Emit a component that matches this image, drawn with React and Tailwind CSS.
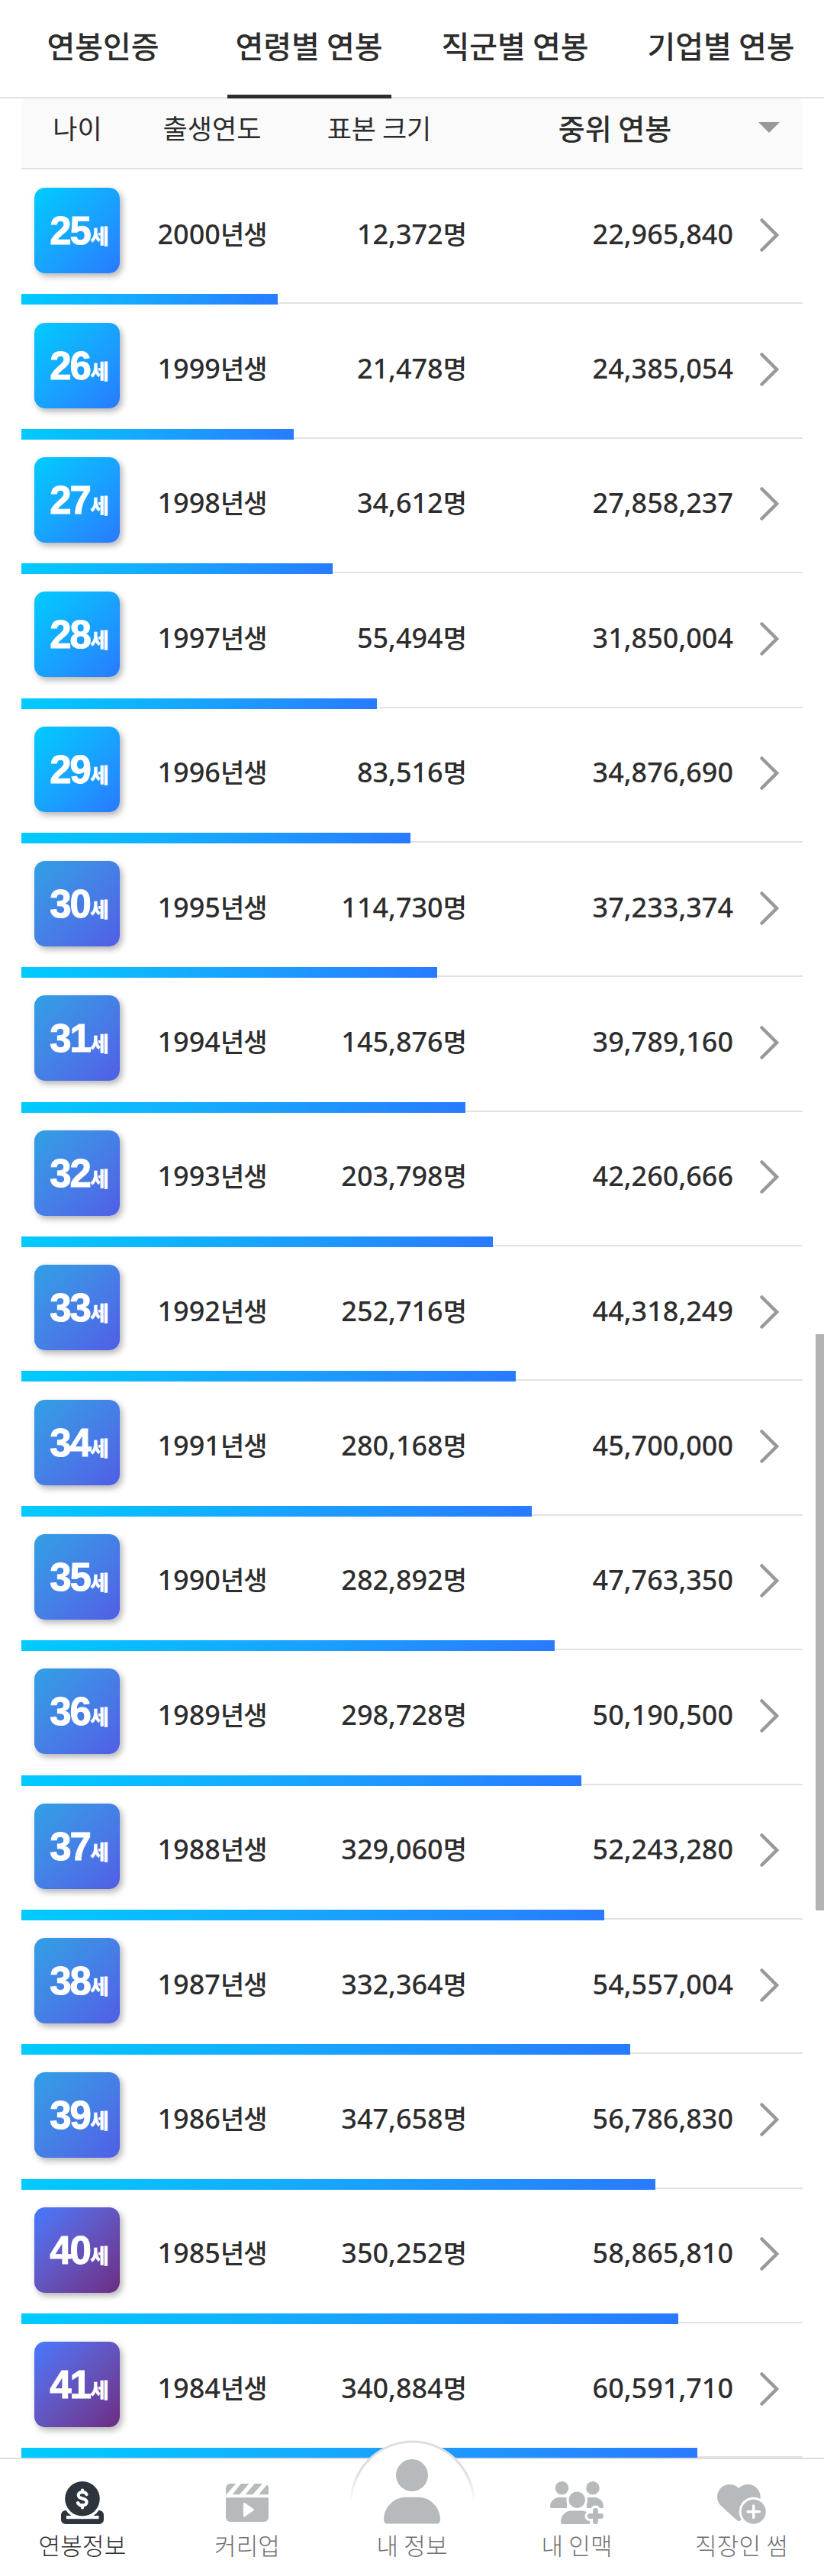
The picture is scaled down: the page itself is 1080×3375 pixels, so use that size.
import { useState } from "react";
import clsx from "clsx";

const TABS = ["연봉인증", "연령별 연봉", "직군별 연봉", "기업별 연봉"];

// bar is full width at this salary
const MAX_SALARY = 70000000;

const ROWS = [
  { age: 25, year: 2000, count: 12372, salary: 22965840 },
  { age: 26, year: 1999, count: 21478, salary: 24385054 },
  { age: 27, year: 1998, count: 34612, salary: 27858237 },
  { age: 28, year: 1997, count: 55494, salary: 31850004 },
  { age: 29, year: 1996, count: 83516, salary: 34876690 },
  { age: 30, year: 1995, count: 114730, salary: 37233374 },
  { age: 31, year: 1994, count: 145876, salary: 39789160 },
  { age: 32, year: 1993, count: 203798, salary: 42260666 },
  { age: 33, year: 1992, count: 252716, salary: 44318249 },
  { age: 34, year: 1991, count: 280168, salary: 45700000 },
  { age: 35, year: 1990, count: 282892, salary: 47763350 },
  { age: 36, year: 1989, count: 298728, salary: 50190500 },
  { age: 37, year: 1988, count: 329060, salary: 52243280 },
  { age: 38, year: 1987, count: 332364, salary: 54557004 },
  { age: 39, year: 1986, count: 347658, salary: 56786830 },
  { age: 40, year: 1985, count: 350252, salary: 58865810 },
  { age: 41, year: 1984, count: 340884, salary: 60591710 },
];

const badgeColor = (age) => {
  if (age < 30) return "from-[#00ccff] to-[#2979ff]";
  if (age < 40) return "from-[#2fa0e5] to-[#505de6]";
  return "from-[#4379ff] to-[#6b2b82]";
};

function SalaryIcon() {
  return (
    <svg width="56" height="56" viewBox="0 0 56 56">
      <rect x="0" y="38" width="56" height="18" rx="6" fill="currentColor" />
      <circle cx="28" cy="22.7" r="26.5" fill="#fff" />
      <rect x="7" y="45" width="42.5" height="4.2" fill="#fff" />
      <circle cx="28" cy="22.8" r="22.8" fill="currentColor" />
      <path
        d="M33.5 17.2c-1-2.2-3-3.2-5.5-3.2-3.2 0-5.200 1.700-5.200 4.300 0 6 10.800 2.600 10.800 8.800 0 2.800-2.300 4.500-5.600 4.500-3 0-5-1.200-6-3.500M28 11.500v3M28 31v3.500"
        fill="none"
        stroke="#fff"
        strokeWidth="4.2"
        strokeLinecap="round"
      />
    </svg>
  );
}

function CareerIcon() {
  return (
    <svg width="56" height="50" viewBox="0 0 56 50">
      <path d="M6 0h44a6 6 0 0 1 6 6v8.3H0V6a6 6 0 0 1 6-6z" fill="currentColor" />
      <path d="M0 15L14 -1h6.5L8 15zM17.3 15L31.3 -1h7.2L25 15zM34.7 15L48.7 -1h7.3L42.5 15z" fill="#fff" />
      <path d="M0 18.2h56V44a6 6 0 0 1-6 6H6a6 6 0 0 1-6-6z" fill="currentColor" />
      <path d="M24.2 26.3v16l11.5-8z" fill="#fff" stroke="#fff" strokeWidth="2.6" strokeLinejoin="round" />
    </svg>
  );
}

function ProfileIcon() {
  return (
    <svg width="74" height="85" viewBox="0 0 74 85">
      <circle cx="37" cy="21" r="21" fill="currentColor" />
      <path
        d="M0 79.5C0 63 13 49.800 29 49.800h16c16 0 29 13.200 29 29.700 0 3.200-1.600 5-4.500 5h-65C1.600 84.500 0 82.700 0 79.500z"
        fill="currentColor"
      />
    </svg>
  );
}

function NetworkIcon() {
  return (
    <svg width="70" height="56" viewBox="0 0 70 56">
      <g fill="currentColor">
        <circle cx="15.5" cy="8.8" r="8.8" />
        <circle cx="56" cy="8.8" r="8.8" />
        <path d="M0 33C0 26 5.5 21 12 21h10v14H1.5Q0 35 0 33z" />
        <path d="M70 33c0-7-5.5-12-12-12H48v14h20.5q1.5 0 1.5-2z" />
      </g>
      <circle cx="35.2" cy="24.3" r="13.8" fill="#fff" />
      <path d="M26 30L22 36h26l-3-6z" fill="#fff" />
      <circle cx="35.2" cy="24.3" r="10.7" fill="currentColor" />
      <path d="M14 53.5c0-8.5 6-15 14-15h14c6 0 10 4 10 10V56H15.5Q14 56 14 53.5z" fill="currentColor" />
      <path d="M59.5 38v15M52 45.500h15" stroke="#fff" strokeWidth="13" strokeLinecap="round" />
      <path d="M59.5 38.5v14.500M52.200 45.500h14.500" stroke="currentColor" strokeWidth="6.8" strokeLinecap="round" />
    </svg>
  );
}

function HeartIcon() {
  return (
    <svg width="64" height="56" viewBox="0 0 64 56">
      <path
        d="M28.300 9C25 5.800 21 4 16.300 4 7.300 4 0 11.300 0 20.300c0 5.200 2 8.900 5.500 12.200l20.300 18.500c1.500 1.200 3.500 1.200 5 0l20.300-18.500c3.500-3.300 5.600-7 5.600-12.200C56.700 11.300 49.400 4 40.400 4c-4.700 0-8.800 1.800-12.100 5z"
        fill="currentColor"
      />
      <circle cx="47.7" cy="39.8" r="19" fill="#fff" />
      <circle cx="47.7" cy="39.8" r="16" fill="currentColor" />
      <path d="M47.7 32v15.600M39.900 39.800h15.600" stroke="#fff" strokeWidth="3.4" strokeLinecap="round" />
    </svg>
  );
}

const NAV_ITEMS = [
  { label: "연봉정보", Icon: SalaryIcon, active: true },
  { label: "커리업", Icon: CareerIcon },
  { label: "내 정보", Icon: ProfileIcon, center: true },
  { label: "내 인맥", Icon: NetworkIcon },
  { label: "직장인 썸", Icon: HeartIcon },
];

function TabBar({ current, onChange }) {
  return (
    <header className="grid grid-cols-4 h-[129px] shrink-0 border-b-2 border-[#e2e2e2] bg-white">
      {TABS.map((tab) => (
        <button key={tab} onClick={() => onChange(tab)} className="flex justify-center h-[129px]">
          <span
            className={clsx(
              "h-full px-[11px] pt-[29px] text-[40px] leading-[60px] font-medium whitespace-nowrap",
              tab === current && "border-b-[5px] border-[#2d2d2d]"
            )}
          >
            {tab}
          </span>
        </button>
      ))}
    </header>
  );
}

function TableHead() {
  return (
    <div className="flex items-center h-[93px] pb-4 shrink-0 border-b-2 border-[#e2e2e2] bg-[#fafafa] text-[35px] leading-none text-center">
      <div className="w-[146px] pl-px">나이</div>
      <div className="w-[208px]">출생연도</div>
      <div className="w-[230px]">표본 크기</div>
      <div className="w-[352px] pl-9 text-[38px] font-medium">중위 연봉</div>
      <div className="w-[88px] flex justify-center">
        <svg width="28" height="14" viewBox="0 0 28 14">
          <path d="M0 0h28L14 14z" fill="#999" />
        </svg>
      </div>
    </div>
  );
}

function SalaryRow({ age, year, count, salary }) {
  return (
    <div className="relative flex items-center h-[176.375px] shrink-0 border-b-2 border-[#e2e2e2] font-['Noto_Sans','Noto_Sans_CJK_KR',sans-serif] text-[36px] leading-none font-medium">
      <div className="w-[146px] flex justify-center pb-[14px]">
        <div
          className={clsx(
            "w-28 h-28 flex items-baseline justify-center pt-[31px] pl-[6px] rounded-[14px] bg-linear-135 text-white font-bold shadow-[3px_4px_9px_rgba(0,0,0,0.3)]",
            badgeColor(age)
          )}
        >
          <span className="font-['Liberation_Sans',sans-serif] text-[51px] tracking-[-2px] [-webkit-text-stroke:1px_white]">
            {age}
          </span>
          <span className="text-[27px] font-black">세</span>
        </div>
      </div>
      <div className="w-[208px] pb-[5px] text-center">
        {year}
        <span className="text-[34px] tracking-[-1px]">년생</span>
      </div>
      <div className="w-[230px] pr-px pb-[5px] text-right">
        {count.toLocaleString("en-US")}
        <span className="text-[34px] tracking-[-1px]">명</span>
      </div>
      <div className="w-[352px] pr-[3px] pb-[5px] text-right">{salary.toLocaleString("en-US")}</div>
      <div className="w-[88px] flex justify-center pb-[3px]">
        <svg width="25" height="44" viewBox="0 0 25 44">
          <path d="M2.5 2.5L22 22 2.5 41.5" fill="none" stroke="#999" strokeWidth="4.5" strokeLinecap="round" />
        </svg>
      </div>
      <div
        className="absolute left-0 -bottom-[3px] z-10 h-[14px] bg-linear-135 from-[#00ccff] to-[#2979ff]"
        style={{ width: `${(salary / MAX_SALARY) * 100}%` }}
      />
    </div>
  );
}

function BottomNav() {
  return (
    <nav className="relative z-20 grid grid-cols-5 h-[155px] shrink-0 border-t-2 border-[#dcdcdc] bg-white">
      {/* raised dome behind the profile button */}
      <svg className="absolute left-[457px] top-[-26px]" width="167" height="167" viewBox="0 0 167 167">
        <defs>
          <linearGradient id="dome" x1="0" y1="0" x2="0" y2="1">
            <stop offset="0.25" stopColor="#dedede" />
            <stop offset="0.5" stopColor="#fff" />
          </linearGradient>
        </defs>
        <circle cx="83.5" cy="83.5" r="80.5" fill="#fff" stroke="url(#dome)" strokeWidth="3" />
      </svg>
      {NAV_ITEMS.map(({ label, Icon, active, center }) => (
        <button key={label} className="relative flex flex-col items-center justify-end pb-[21px]">
          <span
            className={clsx(
              "flex items-center mb-[5px]",
              center ? "h-[85px]" : "h-14",
              active ? "text-[#2d343c]" : "text-[#b7babd]"
            )}
          >
            <Icon />
          </span>
          <span
            className={clsx(
              "text-[31px] leading-[44px] font-light whitespace-nowrap tracking-[0.2px]",
              active ? "text-[#2d2d2d]" : "text-[#707070]"
            )}
          >
            {label}
          </span>
        </button>
      ))}
    </nav>
  );
}

export default function App() {
  const [tab, setTab] = useState("연령별 연봉");

  return (
    <div className="relative flex flex-col w-[1080px] h-[3375px] overflow-hidden bg-white text-[#2d2d2d] font-['Noto_Sans_CJK_KR',sans-serif]">
      <TabBar current={tab} onChange={setTab} />
      <main className="flex-1 min-h-0 overflow-hidden flex flex-col px-7">
        <TableHead />
        {ROWS.map((row) => (
          <SalaryRow key={row.age} {...row} />
        ))}
      </main>
      {/* scroll thumb */}
      <div className="absolute right-0 top-[1748px] w-[11px] h-[755px] bg-[#b3b3b3]" />
      <BottomNav />
    </div>
  );
}
